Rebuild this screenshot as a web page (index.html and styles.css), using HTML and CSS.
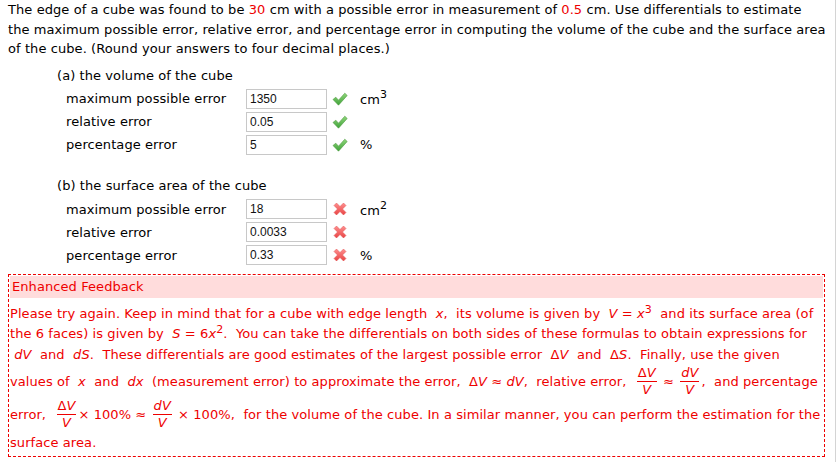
FILE: index.html
```html
<!DOCTYPE html>
<html>
<head>
<meta charset="utf-8">
<link rel="stylesheet" href="styles.css">
</head>
<body>
<div class="page">
  <p class="intro">The edge of a cube was found to be <span class="red">30</span> cm with a possible error in measurement of <span class="red">0.5</span> cm. Use differentials to estimate<br>the maximum possible error, relative error, and percentage error in computing the volume of the cube and the surface area<br>of the cube. (Round your answers to four decimal places.)</p>

  <div class="part">
    <div class="part-title">(a) the volume of the cube</div>
    <div class="row">
      <span class="label">maximum possible error</span>
      <span class="input">1350</span>
      <svg class="mark" viewBox="0 0 16 16"><defs><linearGradient id="g1" x1="0" y1="0" x2="0" y2="1"><stop offset="0" stop-color="#8fd67a"/><stop offset="1" stop-color="#3fa23a"/></linearGradient></defs><path d="M1 8.5 L3.8 6.2 L6.5 9.2 L12.8 2.2 L15.2 4.5 L6.5 14.2 Z" fill="url(#g1)" stroke="#4e9a3e" stroke-width="0.6" stroke-linejoin="round"/></svg>
      <span class="unit">cm<sup>3</sup></span>
    </div>
    <div class="row">
      <span class="label">relative error</span>
      <span class="input">0.05</span>
      <svg class="mark" viewBox="0 0 16 16"><path d="M1 8.5 L3.8 6.2 L6.5 9.2 L12.8 2.2 L15.2 4.5 L6.5 14.2 Z" fill="url(#g1)" stroke="#4e9a3e" stroke-width="0.6" stroke-linejoin="round"/></svg>
      <span class="unit"></span>
    </div>
    <div class="row">
      <span class="label">percentage error</span>
      <span class="input">5</span>
      <svg class="mark" viewBox="0 0 16 16"><path d="M1 8.5 L3.8 6.2 L6.5 9.2 L12.8 2.2 L15.2 4.5 L6.5 14.2 Z" fill="url(#g1)" stroke="#4e9a3e" stroke-width="0.6" stroke-linejoin="round"/></svg>
      <span class="unit">%</span>
    </div>
  </div>

  <div class="part part-b">
    <div class="part-title">(b) the surface area of the cube</div>
    <div class="row">
      <span class="label">maximum possible error</span>
      <span class="input">18</span>
      <svg class="mark" viewBox="0 0 16 16"><defs><linearGradient id="g2" x1="0" y1="0" x2="0" y2="1"><stop offset="0" stop-color="#ff8f8f"/><stop offset="1" stop-color="#e84444"/></linearGradient></defs><path d="M2 4.5 L4.5 2 L8 5.5 L11.5 2 L14 4.5 L10.5 8 L14 11.5 L11.5 14 L8 10.5 L4.5 14 L2 11.5 L5.5 8 Z" fill="url(#g2)" stroke="#e05050" stroke-width="0.5" stroke-linejoin="round"/></svg>
      <span class="unit">cm<sup>2</sup></span>
    </div>
    <div class="row">
      <span class="label">relative error</span>
      <span class="input">0.0033</span>
      <svg class="mark" viewBox="0 0 16 16"><path d="M2 4.5 L4.5 2 L8 5.5 L11.5 2 L14 4.5 L10.5 8 L14 11.5 L11.5 14 L8 10.5 L4.5 14 L2 11.5 L5.5 8 Z" fill="url(#g2)" stroke="#e05050" stroke-width="0.5" stroke-linejoin="round"/></svg>
      <span class="unit"></span>
    </div>
    <div class="row">
      <span class="label">percentage error</span>
      <span class="input">0.33</span>
      <svg class="mark" viewBox="0 0 16 16"><path d="M2 4.5 L4.5 2 L8 5.5 L11.5 2 L14 4.5 L10.5 8 L14 11.5 L11.5 14 L8 10.5 L4.5 14 L2 11.5 L5.5 8 Z" fill="url(#g2)" stroke="#e05050" stroke-width="0.5" stroke-linejoin="round"/></svg>
      <span class="unit">%</span>
    </div>
  </div>

  <div class="feedback">
    <div class="fb-head">Enhanced Feedback</div>
    <div class="fb-body">
      <div class="fb-line">Please try again. Keep in mind that for a cube with edge length&nbsp; <i>x</i>,&nbsp; its volume is given by&nbsp; <i>V</i> = <i>x</i><sup>3</sup>&nbsp; and its surface area (of</div>
      <div class="fb-line">the 6 faces) is given by&nbsp; <i>S</i> = 6<i>x</i><sup>2</sup>.&nbsp; You can take the differentials on both sides of these formulas to obtain expressions for</div>
      <div class="fb-line">&nbsp;<i>dV</i>&nbsp; and&nbsp; <i>dS</i>.&nbsp; These differentials are good estimates of the largest possible error&nbsp; Δ<i>V</i>&nbsp; and&nbsp; Δ<i>S</i>.&nbsp; Finally, use the given</div>
      <div class="fb-line tall">values of&nbsp; <i>x</i>&nbsp; and&nbsp; <i>dx</i>&nbsp; (measurement error) to approximate the error,&nbsp; Δ<i>V</i> ≈ <i>dV</i>,&nbsp; relative error,&nbsp; <span class="frac"><span class="num">Δ<i>V</i></span><span class="den"><i>V</i></span></span> ≈ <span class="frac"><span class="num"><i>dV</i></span><span class="den"><i>V</i></span></span>,&nbsp; and percentage</div>
      <div class="fb-line tall t2">error,&nbsp; <span class="frac"><span class="num">Δ<i>V</i></span><span class="den"><i>V</i></span></span>× 100% ≈ <span class="frac"><span class="num"><i>dV</i></span><span class="den"><i>V</i></span></span> × 100%,&nbsp; for the volume of the cube. In a similar manner, you can perform the estimation for the</div>
      <div class="fb-line last">surface area.</div>
    </div>
  </div>
</div>
</body>
</html>
```

FILE: styles.css
```css
html, body {
  margin: 0;
  padding: 0;
  background: #fff;
}
.page {
  width: 827px;
  padding: 0 0 4px 8px;
  border-right: 1px solid #d4d4d4;
  min-height: 458px;
  font-family: "DejaVu Sans", Verdana, sans-serif;
  font-size: 13px;
  letter-spacing: 0.08px;
  color: #000;
}
.intro {
  margin: 0;
  line-height: 19.5px;
  width: 830px;
  white-space: nowrap;
}
.red {
  color: #e00;
}
.part {
  margin-top: 8px;
  padding-left: 49px;
}
.part-b {
  margin-top: 21px;
}
.part-title {
  height: 18px;
  line-height: 18px;
  margin-bottom: 2.5px;
}
.row {
  display: flex;
  align-items: center;
  height: 23px;
  padding-left: 9px;
}
.label {
  width: 180px;
}
.input {
  box-sizing: border-box;
  width: 81px;
  height: 20px;
  border: 1px solid #c8c8c8;
  font-family: "Liberation Sans", Arial, sans-serif;
  font-size: 12px;
  letter-spacing: 0;
  line-height: 18px;
  padding-left: 3px;
  color: #111;
}
.mark {
  width: 16px;
  height: 16px;
  margin-left: 5px;
}
.unit {
  margin-left: 12px;
}
.unit sup {
  font-size: 11px;
  position: relative;
  top: -1px;
}
.feedback {
  margin-top: 7px;
  width: 813px;
  border: 1px dashed #e00;
  color: #e00;
  padding: 1px;
}
.fb-head {
  background: #ffdcdc;
  height: 22px;
  line-height: 22px;
  padding-left: 2px;
}
.fb-body {
  padding: 6px 0 1px 0;
}
.fb-line {
  line-height: 20.5px;
  white-space: nowrap;
}
.fb-line sup {
  font-size: 11px;
  line-height: 0;
}
.fb-line.tall {
  height: 33.5px;
  display: flex;
  align-items: center;
  white-space: pre;
}
.fb-line.t2 {
  height: 32.5px;
}
.fb-line.last {
  line-height: 23px;
}
.frac {
  display: inline-flex;
  flex-direction: column;
  align-items: center;
  vertical-align: middle;
  line-height: 16px;
  margin: 0 2px;
}
.frac .num {
  border-bottom: 1px solid #e00;
  padding: 0 1px;
}
```
